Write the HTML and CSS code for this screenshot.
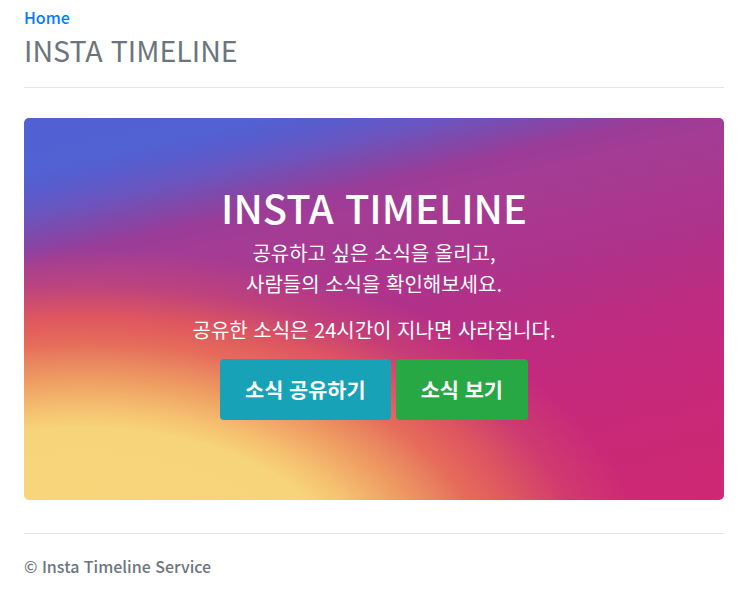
FILE: index.html
```html
<!DOCTYPE html>
<html lang="ko">
<head>
<meta charset="utf-8">
<title>INSTA TIMELINE</title>
<link rel="stylesheet" href="styles.css">
</head>
<body>
<div class="container">
  <header class="site-header">
    <a class="home-link" href="#">Home</a>
    <h2 class="site-title">INSTA TIMELINE</h2>
  </header>
  <hr class="rule rule-top">
  <main class="hero">
    <h1 class="hero-title">INSTA TIMELINE</h1>
    <p class="hero-lead">공유하고 싶은 소식을 올리고,<br>사람들의 소식을 확인해보세요.</p>
    <p class="hero-note">공유한 소식은 24시간이 지나면 사라집니다.</p>
    <div class="hero-actions">
      <a class="btn btn-info" href="#">소식 공유하기</a>
      <a class="btn btn-success" href="#">소식 보기</a>
    </div>
  </main>
  <hr class="rule rule-bottom">
  <footer class="site-footer">© Insta Timeline Service</footer>
</div>
</body>
</html>
```
FILE: styles.css
```css
* { box-sizing: border-box; }
html, body { margin: 0; padding: 0; background: #fff; }
body {
  font-family: "Noto Sans CJK KR", "Noto Sans", sans-serif;
  color: #212529;
}
.container {
  width: 700px;
  margin-left: 24px;
}
.site-header {
  padding-top: 5px;
}
.home-link {
  display: block;
  color: #007bff;
  text-decoration: none;
  font-size: 16px;
  font-weight: 500;
  line-height: 24px;
}
.site-title {
  margin: 4px 0 0;
  font-size: 28.6px;
  font-weight: 400;
  line-height: 34px;
  color: #6c757d;
}
.rule {
  border: 0;
  border-top: 1px solid #e5e5e5;
  margin: 0;
}
.rule-top { margin-top: 20px; }
.hero {
  margin-top: 30px;
  height: 382px;
  border-radius: 5px;
  color: #fff;
  text-align: center;
  padding-top: 62px;
  background:
    radial-gradient(ellipse 570px 340px at 60px 470px,
      #f8d77a 0%, #f7d47a 47%, #f5c070 53%, #ee9a62 62%, #e8805f 68%,
      #e66c5a 72%, #dd5660 80%, rgba(215, 78, 102, 0.45) 89%, rgba(210, 60, 105, 0) 100%),
    linear-gradient(167deg,
      #5161d3 0%, #5262d2 10%, #5a5ccc 14%, #6a55c0 18%, #7e4aac 22%,
      #9a3c98 27%, #a43c95 32%, #b0328a 50%, #c22a7e 67%, #cf2872 100%);
}
.hero-title {
  margin: 0;
  font-size: 40px;
  font-weight: 500;
  line-height: 54px;
}
.hero-lead {
  margin: 3px 0 0;
  font-size: 20px;
  line-height: 31px;
}
.hero-note {
  margin: 15px 0 0;
  font-size: 20px;
  line-height: 31px;
}
.hero-actions {
  margin-top: 14px;
  display: flex;
  justify-content: center;
  gap: 5px;
}
.btn {
  display: inline-block;
  height: 61px;
  line-height: 61px;
  padding: 0 25px;
  border-radius: 4px;
  color: #fff;
  font-size: 20.8px;
  font-weight: 700;
  text-decoration: none;
}
.btn-info { background: #17a2b8; }
.btn-success { background: #28a745; }
.rule-bottom { margin-top: 33px; }
.site-footer {
  padding-top: 20px;
  font-size: 16px;
  line-height: 24px;
  font-weight: 500;
  color: #6c757d;
}
```
